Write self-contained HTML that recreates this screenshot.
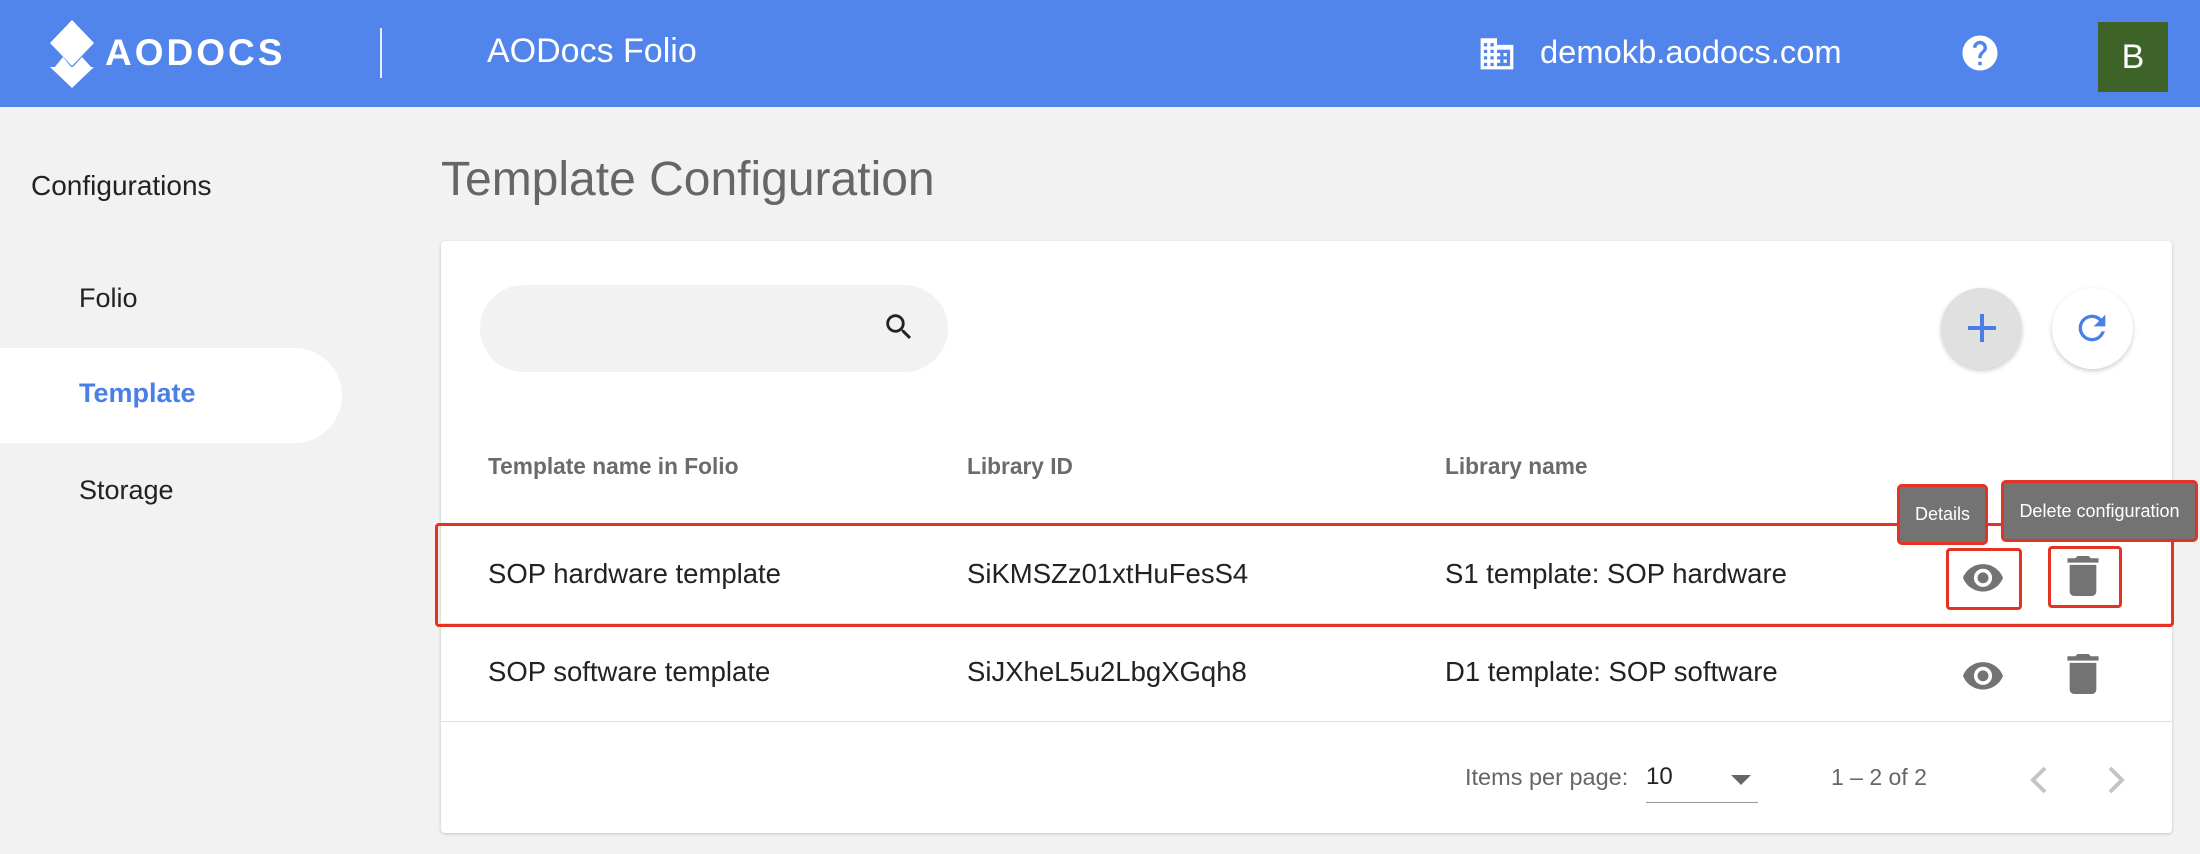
<!DOCTYPE html>
<html><head><meta charset="utf-8"><style>
*{margin:0;padding:0;box-sizing:border-box}
body{width:2200px;height:854px;background:#f2f2f2;font-family:"Liberation Sans",sans-serif;position:relative;overflow:hidden;color:#222}
.a{position:absolute;white-space:nowrap}
.hdr{position:absolute;left:0;top:0;width:2200px;height:107px;background:#5285eb}
.card{position:absolute;left:441px;top:241px;width:1731px;height:592px;background:#fff;border-radius:4px;box-shadow:0 1px 3px rgba(0,0,0,.2)}
.th{font-size:22.7px;color:#6b6b6b;font-weight:bold;top:453px}
.td{font-size:27.5px;color:#222}
.red{position:absolute;border:3px solid #e53323;border-radius:4px}
.tip{position:absolute;background:#737373;color:#fff;font-size:18px;display:flex;align-items:center;justify-content:center;border:3px solid #e53323;border-radius:5px}
</style></head><body>
<div class="hdr">
 <svg class="a" style="left:49px;top:20px" width="46" height="68" viewBox="0 0 46 68">
  <path d="M23 0 L45 23 L23 46 L1 23Z" fill="#fff"/>
  <path d="M14 37 L23 48 L5 48Z" fill="#fff"/>
  <path d="M33 37 L43 48 L23 48Z" fill="#fff"/>
  <path d="M1 47 L45 47 L23 68Z" fill="#fff"/>
 </svg>
 <div class="a" style="left:105px;top:32px;font-size:37px;font-weight:bold;color:#fff;letter-spacing:3px">AODOCS</div>
 <div class="a" style="left:380px;top:28px;width:2px;height:50px;background:#e8eefc"></div>
 <div class="a" style="left:487px;top:32px;font-size:34px;color:#fff">AODocs Folio</div>
 <svg class="a" style="left:1477px;top:35px" width="40" height="36" viewBox="0 0 24 22"><path fill="#fff" d="M12 6V2H2v19h20V6H12zM6 19H4v-2h2v2zm0-4H4v-2h2v2zm0-4H4V9h2v2zm0-4H4V5h2v2zm4 12H8v-2h2v2zm0-4H8v-2h2v2zm0-4H8V9h2v2zm0-4H8V5h2v2zm10 12h-8v-2h2v-2h-2v-2h2v-2h-2V9h8v10zm-2-8h-2v2h2v-2zm0 4h-2v2h2v-2z"/></svg>
 <div class="a" style="left:1540px;top:33px;font-size:32.7px;color:#fff">demokb.aodocs.com</div>
 <svg class="a" style="left:1959px;top:32px" width="42" height="42" viewBox="0 0 24 24"><path fill="#fff" d="M12 2C6.48 2 2 6.48 2 12s4.48 10 10 10 10-4.48 10-10S17.52 2 12 2zm1 17h-2v-2h2v2zm2.07-7.75l-.9.92C13.45 12.9 13 13.5 13 15h-2v-.5c0-1.1.45-2.1 1.17-2.83l1.24-1.26c.37-.36.59-.86.59-1.41 0-1.1-.9-2-2-2s-2 .9-2 2H8c0-2.21 1.79-4 4-4s4 1.79 4 4c0 .88-.36 1.68-.93 2.25z"/></svg>
 <div class="a" style="left:2098px;top:22px;width:70px;height:70px;background:#3d6328;color:#fff;font-size:34px;display:flex;align-items:center;justify-content:center">B</div>
</div>
<div class="a" style="left:31px;top:170px;font-size:28px">Configurations</div>
<div class="a" style="left:79px;top:283px;font-size:27px">Folio</div>
<div class="a" style="left:0;top:348px;width:342px;height:95px;background:#fff;border-radius:0 48px 48px 0"></div>
<div class="a" style="left:79px;top:378px;font-size:27px;color:#4a7fe6;font-weight:bold">Template</div>
<div class="a" style="left:79px;top:475px;font-size:27px">Storage</div>
<div class="a" style="left:441px;top:152px;font-size:48px;color:#666">Template Configuration</div>
<div class="card"></div>
<div class="a" style="left:480px;top:285px;width:468px;height:87px;background:#f2f2f2;border-radius:44px"></div>
<svg class="a" style="left:882px;top:310px" width="34" height="34" viewBox="0 0 24 24"><path fill="#222" d="M15.5 14h-.79l-.28-.27A6.47 6.47 0 0 0 16 9.5 6.5 6.5 0 1 0 9.5 16c1.61 0 3.09-.59 4.23-1.57l.27.28v.79l5 4.99L20.49 19l-4.99-5zm-6 0C7.01 14 5 11.99 5 9.5S7.01 5 9.5 5 14 7.01 14 9.5 11.99 14 9.5 14z"/></svg>
<div class="a" style="left:1941px;top:288px;width:81px;height:81px;border-radius:50%;background:#e0e0e0;box-shadow:0 2px 5px rgba(0,0,0,.2)"></div>
<div class="a" style="left:1968px;top:326px;width:28px;height:4px;background:#4a7fe6"></div>
<div class="a" style="left:1980px;top:314px;width:4px;height:28px;background:#4a7fe6"></div>
<div class="a" style="left:2052px;top:288px;width:81px;height:81px;border-radius:50%;background:#fff;box-shadow:0 2px 5px rgba(0,0,0,.2)"></div>
<svg class="a" style="left:2072px;top:308px" width="40" height="40" viewBox="0 0 24 24"><path fill="#4a7fe6" d="M17.65 6.35A7.96 7.96 0 0 0 12 4a8 8 0 1 0 7.73 10h-2.08A6 6 0 1 1 12 6c1.66 0 3.14.69 4.22 1.78L13 11h7V4l-2.35 2.35z"/></svg>
<div class="a th" style="left:488px">Template name in Folio</div>
<div class="a th" style="left:967px">Library ID</div>
<div class="a th" style="left:1445px">Library name</div>
<div class="a" style="left:441px;top:623px;width:1731px;height:2px;background:#e0e0e0"></div>
<div class="a" style="left:441px;top:721px;width:1731px;height:1px;background:#e0e0e0"></div>
<div class="a td" style="left:488px;top:558px">SOP hardware template</div>
<div class="a td" style="left:967px;top:558px">SiKMSZz01xtHuFesS4</div>
<div class="a td" style="left:1445px;top:558px">S1 template: SOP hardware</div>
<div class="a td" style="left:488px;top:656px">SOP software template</div>
<div class="a td" style="left:967px;top:656px">SiJXheL5u2LbgXGqh8</div>
<div class="a td" style="left:1445px;top:656px">D1 template: SOP software</div>
<svg class="a" style="left:1961px;top:556px" width="44" height="40" viewBox="0 0 24 22"><path fill="#737373" d="M12 4.5C7 4.5 2.73 7.61 1 12c1.73 4.39 6 7.5 11 7.5s9.27-3.11 11-7.5c-1.73-4.39-6-7.5-11-7.5zM12 17a5 5 0 1 1 0-10 5 5 0 0 1 0 10zm0-8a3 3 0 1 0 0 6 3 3 0 0 0 0-6z"/></svg>
<svg class="a" style="left:1961px;top:654px" width="44" height="40" viewBox="0 0 24 22"><path fill="#737373" d="M12 4.5C7 4.5 2.73 7.61 1 12c1.73 4.39 6 7.5 11 7.5s9.27-3.11 11-7.5c-1.73-4.39-6-7.5-11-7.5zM12 17a5 5 0 1 1 0-10 5 5 0 0 1 0 10zm0-8a3 3 0 1 0 0 6 3 3 0 0 0 0-6z"/></svg>
<svg class="a" style="left:2066px;top:556px" width="34" height="40" viewBox="0 0 14 18"><path fill="#737373" d="M1 16c0 1.1.9 2 2 2h8c1.1 0 2-.9 2-2V4H1v12zM14 1h-3.5l-1-1h-5l-1 1H0v2h14V1z"/></svg>
<svg class="a" style="left:2066px;top:654px" width="34" height="40" viewBox="0 0 14 18"><path fill="#737373" d="M1 16c0 1.1.9 2 2 2h8c1.1 0 2-.9 2-2V4H1v12zM14 1h-3.5l-1-1h-5l-1 1H0v2h14V1z"/></svg>
<div class="red" style="left:435px;top:523px;width:1739px;height:104px"></div>
<div class="red" style="left:1946px;top:548px;width:76px;height:62px"></div>
<div class="red" style="left:2048px;top:546px;width:74px;height:62px"></div>
<div class="tip" style="left:1897px;top:484px;width:91px;height:61px">Details</div>
<div class="tip" style="left:2001px;top:480px;width:197px;height:62px">Delete configuration</div>
<div class="a" style="left:1465px;top:764px;font-size:23.5px;color:#666">Items per page:</div>
<div class="a" style="left:1646px;top:763px;font-size:24px;color:#222">10</div>
<div class="a" style="left:1646px;top:802px;width:112px;height:1px;background:#999"></div>
<div class="a" style="left:1731px;top:775px;width:0;height:0;border-left:10px solid transparent;border-right:10px solid transparent;border-top:10px solid #666"></div>
<div class="a" style="left:1831px;top:764px;font-size:23px;color:#666">1 – 2 of 2</div>
<svg class="a" style="left:2025px;top:764px" width="28" height="32" viewBox="0 0 14 16"><path d="M10 2 L4 8 L10 14" stroke="#c4c4c4" stroke-width="2" fill="none"/></svg>
<svg class="a" style="left:2102px;top:764px" width="28" height="32" viewBox="0 0 14 16"><path d="M4 2 L10 8 L4 14" stroke="#c4c4c4" stroke-width="2" fill="none"/></svg>
</body></html>
